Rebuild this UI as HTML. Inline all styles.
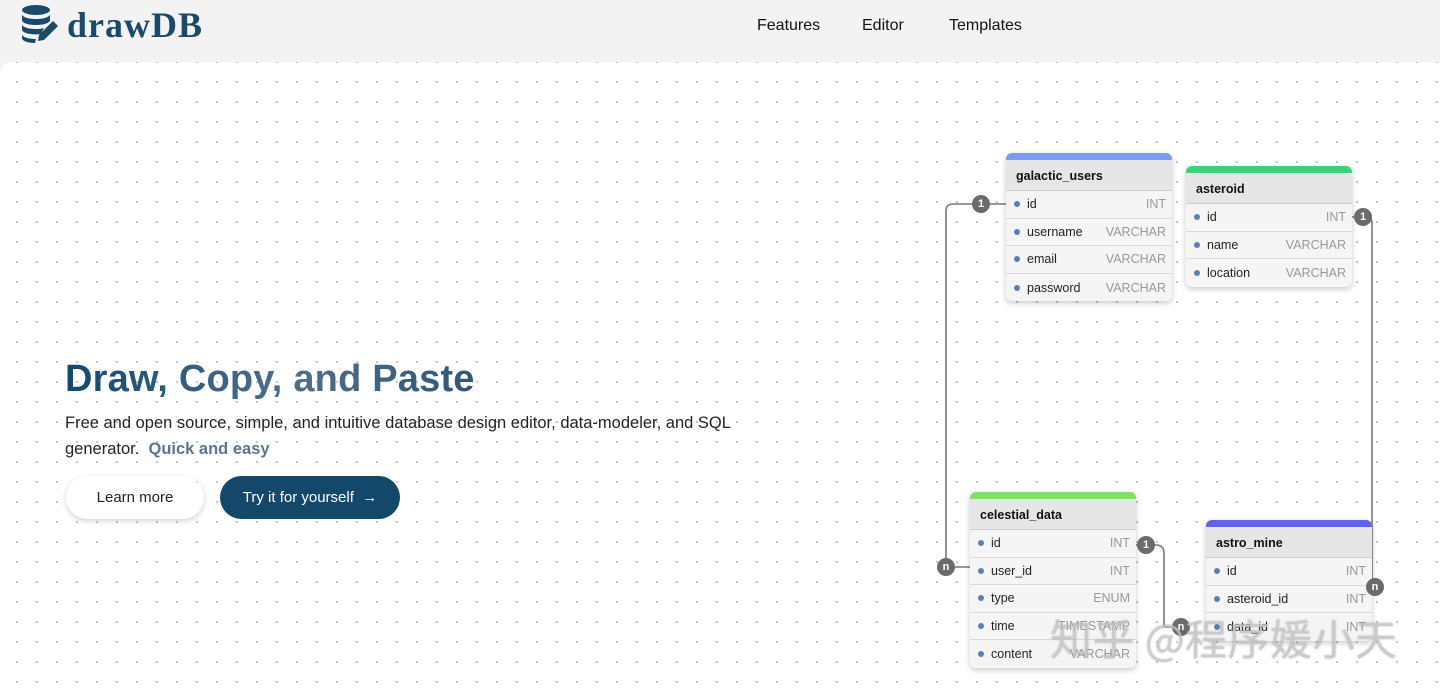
<!DOCTYPE html>
<html><head><meta charset="utf-8"><style>
*{margin:0;padding:0;box-sizing:border-box}
body{width:1440px;height:695px;overflow:hidden;background:#f3f3f3;font-family:"Liberation Sans","Noto Sans CJK SC",sans-serif;position:relative}
.hdr{position:absolute;left:0;top:0;width:1440px;height:62px;background:#f3f3f3}
.logo{position:absolute;left:67px;top:4px;font-family:"Liberation Serif",serif;font-weight:bold;font-size:36px;color:#1b4a68;letter-spacing:1px}
.nav{position:absolute;top:17px;font-size:16px;color:#111}
.main{position:absolute;left:0;top:62px;width:1440px;height:633px;background-color:#fff;border-top-left-radius:12px;
background-image:radial-gradient(circle,#c4c4c4 1px,transparent 1.3px);background-size:20px 20px;background-position:7px 10px}
h1{position:absolute;left:65px;top:358px;font-size:38px;font-weight:bold;letter-spacing:0.2px;background:linear-gradient(90deg,#12496e,#4f6f8c 55%,#2f5777);-webkit-background-clip:text;color:transparent;white-space:nowrap}
.p{position:absolute;left:65px;top:410px;font-size:16.5px;line-height:26px;color:#222;width:700px}
.p b{color:#5b7590}
.btn{position:absolute;top:476px;height:43px;border-radius:22px;font-size:15px;display:flex;align-items:center;justify-content:center}
.b1{left:66px;width:138px;background:#fff;color:#222;box-shadow:0 2px 6px rgba(0,0,0,.18)}
.b2{left:220px;width:180px;background:#14486a;color:#fff}
.t{position:absolute;width:166px;background:#f5f5f5;border-radius:6px;box-shadow:0 2px 6px rgba(0,0,0,.22);overflow:hidden;font-size:12.5px}
.t .bar{height:7px}
.t .h{height:31px;background:#e6e6e6;padding:9px 10px;font-weight:bold;font-size:12.5px;color:#111;border-bottom:1px solid #ccc}
.t .r{height:27.6px;display:flex;align-items:center;padding:0 6px 0 8px;border-bottom:1px solid #d8d8d8;color:#222}
.t .r:last-child{border-bottom:none}
.t .r i{width:6px;height:6px;border-radius:50%;background:#5b7fb5;margin-right:7px}
.t .r span{margin-left:auto;color:#999}
.c{position:absolute;width:18px;height:18px;border-radius:50%;background:#6b6b6b;color:#fff;font-size:11px;font-weight:bold;display:flex;align-items:center;justify-content:center}
.wm{position:absolute;left:1050px;top:607px;font-size:42px;letter-spacing:0.5px;color:rgba(200,200,200,.75);font-family:"Noto Sans CJK SC",sans-serif;white-space:nowrap;text-shadow:0 0 2px rgba(120,120,120,.4)}
</style></head><body>
<div class="hdr">
<svg style="position:absolute;left:20px;top:3px" width="42" height="42" viewBox="0 0 42 42"><ellipse cx="16" cy="7" rx="14" ry="5" fill="#1b4a68"/><path d="M2 11c0 3 6 5 14 5s14-2 14-5v6c0 3-6 5-14 5S2 20 2 17z" fill="#1b4a68"/><path d="M2 21c0 3 6 5 14 5 3 0 6-.3 8-1l-3 6c-2 .3-3 .4-5 .4-8 0-14-2-14-5z" fill="#1b4a68"/><path d="M2 31c0 3 6 5 14 5l-1 4C8 40 2 38 2 35z" fill="#1b4a68"/><path d="M33 18l5 5-14 14-6 1 1-6z" fill="#1b4a68"/></svg>
<div class="logo">drawDB</div>
<div class="nav" style="left:757px">Features</div>
<div class="nav" style="left:862px">Editor</div>
<div class="nav" style="left:949px">Templates</div>
</div>
<div class="main"></div>
<h1>Draw, Copy, and Paste</h1>
<div class="p">Free and open source, simple, and intuitive database design editor, data-modeler, and SQL generator.&nbsp; <b>Quick and easy</b></div>
<div class="btn b1">Learn more</div>
<div class="btn b2">Try it for yourself &nbsp;→</div>
<svg style="position:absolute;left:0;top:0" width="1440" height="695"><g fill="none" stroke="#777" stroke-width="1.6"><path d="M1006 204H953q-7 0-7 7V560q0 7 7 7h17"/><path d="M1352 217h14q6 0 6 6V587"/><path d="M1136 545h20q8 0 8 8v74h18"/></g></svg>
<div class="t" style="left:1006px;top:153px"><div class="bar" style="background:#7b9cf0"></div><div class="h">galactic_users</div><div class="r"><i></i>id<span>INT</span></div><div class="r"><i></i>username<span>VARCHAR</span></div><div class="r"><i></i>email<span>VARCHAR</span></div><div class="r"><i></i>password<span>VARCHAR</span></div></div>
<div class="t" style="left:1186px;top:166px"><div class="bar" style="background:#3ed07a"></div><div class="h">asteroid</div><div class="r"><i></i>id<span>INT</span></div><div class="r"><i></i>name<span>VARCHAR</span></div><div class="r"><i></i>location<span>VARCHAR</span></div></div>
<div class="t" style="left:970px;top:492px"><div class="bar" style="background:#84dd6c"></div><div class="h">celestial_data</div><div class="r"><i></i>id<span>INT</span></div><div class="r"><i></i>user_id<span>INT</span></div><div class="r"><i></i>type<span>ENUM</span></div><div class="r"><i></i>time<span>TIMESTAMP</span></div><div class="r"><i></i>content<span>VARCHAR</span></div></div>
<div class="t" style="left:1206px;top:520px"><div class="bar" style="background:#6262f0"></div><div class="h">astro_mine</div><div class="r"><i></i>id<span>INT</span></div><div class="r"><i></i>asteroid_id<span>INT</span></div><div class="r"><i></i>data_id<span>INT</span></div></div>
<div class="c" style="left:972px;top:195px">1</div>
<div class="c" style="left:1354px;top:208px">1</div>
<div class="c" style="left:937px;top:558px">n</div>
<div class="c" style="left:1137px;top:536px">1</div>
<div class="c" style="left:1366px;top:578px">n</div>
<div class="c" style="left:1172px;top:618px">n</div>
<div class="wm">知乎 @程序媛小天</div>
</body></html>
